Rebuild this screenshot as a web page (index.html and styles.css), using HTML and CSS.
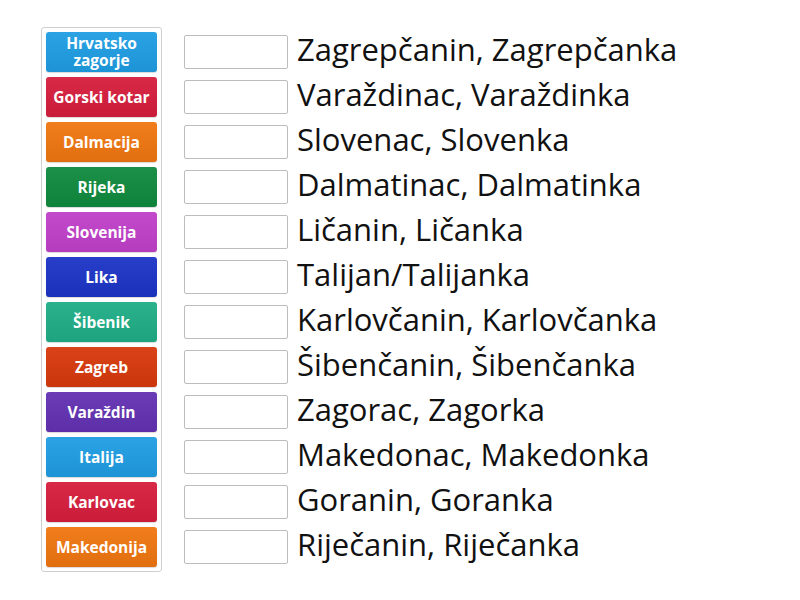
FILE: index.html
```html
<!DOCTYPE html>
<html lang="hr">
<head>
    <meta charset="UTF-8">
    <meta name="viewport" content="width=device-width, initial-scale=1.0">
    <title>Spoji parove</title>
    <link rel="stylesheet" href="styles.css">
</head>
<body>

<div class="board">
    <div class="tiles">
        <div class="tile blue">Hrvatsko zagorje</div>
        <div class="tile red">Gorski kotar</div>
        <div class="tile orange">Dalmacija</div>
        <div class="tile green">Rijeka</div>
        <div class="tile pink">Slovenija</div>
        <div class="tile navy">Lika</div>
        <div class="tile teal">Šibenik</div>
        <div class="tile rust">Zagreb</div>
        <div class="tile purple">Varaždin</div>
        <div class="tile blue">Italija</div>
        <div class="tile red">Karlovac</div>
        <div class="tile orange">Makedonija</div>
    </div>

    <div class="targets">
        <div class="row"><div class="slot"></div><span class="label">Zagrepčanin, Zagrepčanka</span></div>
        <div class="row"><div class="slot"></div><span class="label">Varaždinac, Varaždinka</span></div>
        <div class="row"><div class="slot"></div><span class="label">Slovenac, Slovenka</span></div>
        <div class="row"><div class="slot"></div><span class="label">Dalmatinac, Dalmatinka</span></div>
        <div class="row"><div class="slot"></div><span class="label">Ličanin, Ličanka</span></div>
        <div class="row"><div class="slot"></div><span class="label">Talijan/Talijanka</span></div>
        <div class="row"><div class="slot"></div><span class="label">Karlovčanin, Karlovčanka</span></div>
        <div class="row"><div class="slot"></div><span class="label">Šibenčanin, Šibenčanka</span></div>
        <div class="row"><div class="slot"></div><span class="label">Zagorac, Zagorka</span></div>
        <div class="row"><div class="slot"></div><span class="label">Makedonac, Makedonka</span></div>
        <div class="row"><div class="slot"></div><span class="label">Goranin, Goranka</span></div>
        <div class="row"><div class="slot"></div><span class="label">Riječanin, Riječanka</span></div>
    </div>
</div>

</body>
</html>
```

FILE: styles.css
```css
body {
    font-family: "Open Sans", "Liberation Sans", sans-serif;
    margin: 0;
    background-color: #fff;
    color: #111;
}
.board {
    display: flex;
    align-items: flex-start;
    padding: 27px 0 0 41px;
}
.tiles {
    display: flex;
    flex-direction: column;
    gap: 5px;
    padding: 4px;
    border: 1px solid #cfcfcf;
    border-radius: 3px;
}
.tile {
    width: 111px;
    height: 40px;
    box-sizing: border-box;
    padding: 0 4px;
    display: flex;
    align-items: center;
    justify-content: center;
    text-align: center;
    color: #fff;
    font-size: 15.5px;
    font-weight: 700;
    line-height: 17px;
    border-radius: 3px;
    background-image: linear-gradient(rgba(255, 255, 255, 0.05), rgba(0, 0, 0, 0.06));
    box-shadow: 0 1px 1px rgba(0, 0, 0, 0.15);
}
.blue { background-color: #1f9de2; }
.red { background-color: #d61e3d; }
.orange { background-color: #f07610; }
.green { background-color: #108a3e; }
.pink { background-color: #c040c9; }
.navy { background-color: #1c34c6; }
.teal { background-color: #1fae86; }
.rust { background-color: #d8390c; }
.purple { background-color: #6231b2; }

.targets {
    display: flex;
    flex-direction: column;
    gap: 5px;
    padding-top: 5px;
    margin-left: 22px;
}
.row {
    height: 40px;
    display: flex;
    align-items: center;
}
.slot {
    width: 104px;
    height: 34px;
    box-sizing: border-box;
    border: 1px solid #bdbdbd;
    border-radius: 2px;
    background: #fff;
}
.label {
    margin-left: 9px;
    padding-bottom: 6px;
    font-size: 31px;
    line-height: 40px;
    white-space: nowrap;
}
```
